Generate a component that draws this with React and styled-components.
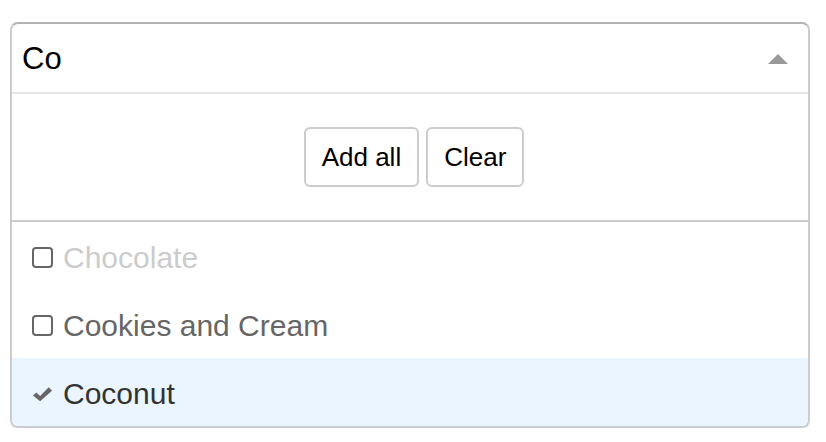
import React from 'react'
import styled, { createGlobalStyle } from 'styled-components'

const Global = createGlobalStyle`
  body {
    margin: 0;
    background: #fff;
    font-family: "Liberation Sans", Arial, sans-serif;
  }
`

const Page = styled.div`
  padding: 22px 16px 0 10px;
`

const Select = styled.div`
  width: 800px;
  border: 2px solid #ccc;
  border-top-color: #b3b3b3;
  border-radius: 8px;
  box-shadow: 0 2px 0 rgba(0, 0, 0, 0.06);
  overflow: hidden;
  background: #fff;
  box-sizing: border-box;
`

const Control = styled.div`
  height: 70px;
  display: flex;
  align-items: center;
  justify-content: space-between;
  padding: 2px 20px 0 10px;
  box-sizing: border-box;
  border-bottom: 2px solid #e6e6e6;
`

const Value = styled.span`
  font-size: 31px;
  color: #000;
`

const Arrow = styled.span`
  width: 0;
  height: 0;
  border-left: 10px solid transparent;
  border-right: 10px solid transparent;
  border-bottom: 10px solid #999;
`

const Actions = styled.div`
  display: flex;
  justify-content: center;
  gap: 7px;
  padding: 33px 0 33px 8px;
  border-bottom: 2px solid #ccc;
`

const Button = styled.button`
  height: 60px;
  padding: 0 16px;
  border: 2px solid #ccc;
  border-radius: 6px;
  background: #fff;
  color: #000;
  font-family: "Liberation Sans", Arial, sans-serif;
  font-size: 26px;
`

const Option = styled.div`
  height: 68px;
  display: flex;
  align-items: center;
  gap: 10px;
  padding: 3px 0 0 20px;
  box-sizing: border-box;
  font-size: 30px;
  color: ${p => (p.disabled ? '#ccc' : p.selected ? '#333' : '#666')};
  background: ${p => (p.selected ? '#ebf5ff' : '#fff')};
`

const Box = styled.span`
  width: 21px;
  height: 21px;
  display: flex;
  align-items: center;
  justify-content: center;
  box-sizing: border-box;
  border: ${p => (p.checked ? 'none' : '2px solid #666')};
  border-radius: 4px;
`

const Check = () => (
  <svg width="22" height="18" viewBox="0 0 22 18">
    <path d="M1 10.5 L4.5 7.5 L8.5 11 L17.5 2 L21 5.5 L8.5 16.5 Z" fill="#666" />
  </svg>
)

const options = [
  { label: 'Chocolate', disabled: true },
  { label: 'Cookies and Cream' },
  { label: 'Coconut', selected: true },
]

export default function App() {
  return (
    <Page>
      <Global />
      <Select>
        <Control>
          <Value>Co</Value>
          <Arrow />
        </Control>
        <Actions>
          <Button>Add all</Button>
          <Button>Clear</Button>
        </Actions>
        {options.map(o => (
          <Option key={o.label} disabled={o.disabled} selected={o.selected}>
            <Box checked={o.selected}>{o.selected && <Check />}</Box>
            {o.label}
          </Option>
        ))}
      </Select>
    </Page>
  )
}
